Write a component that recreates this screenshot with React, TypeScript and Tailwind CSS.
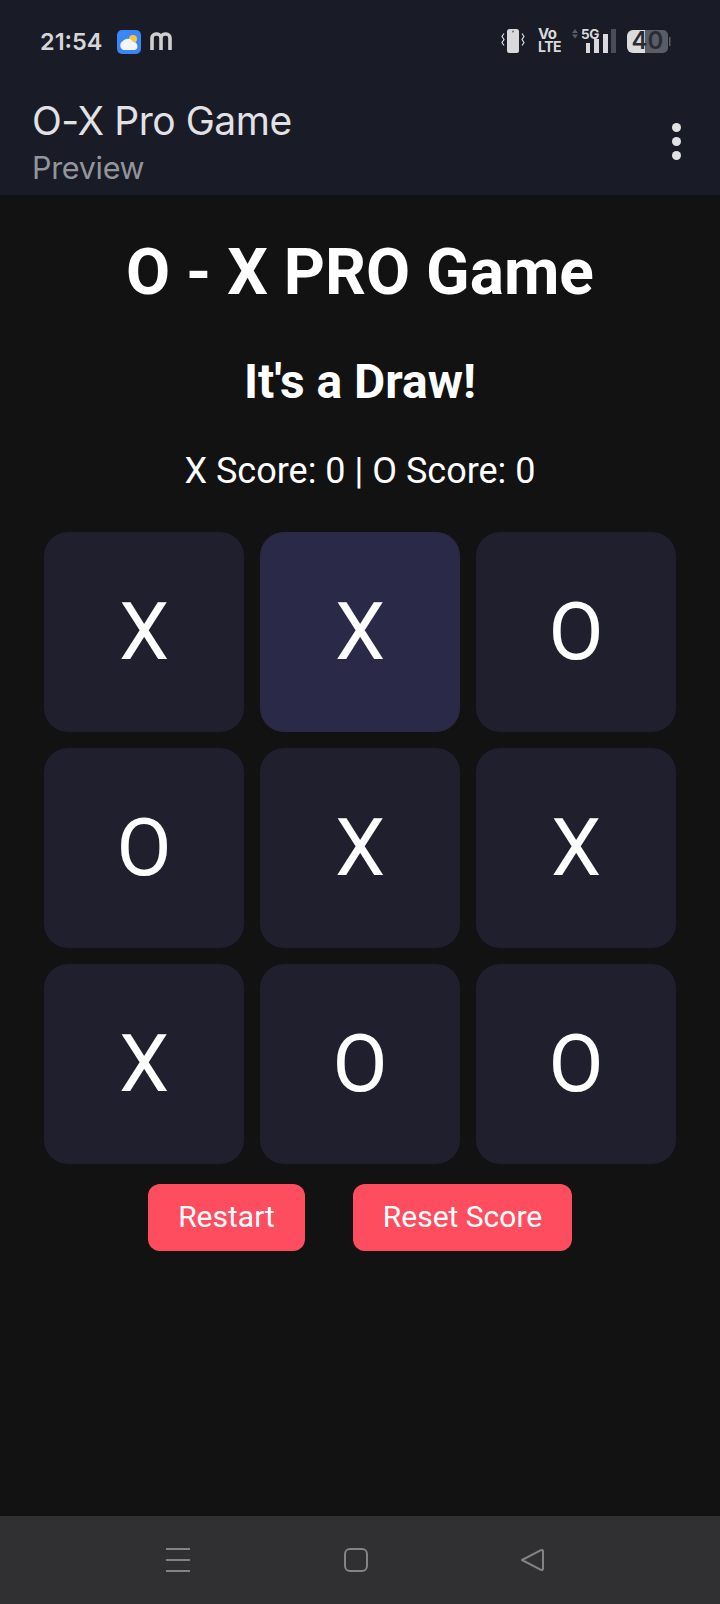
import React from "react";

const cells = ["X", "X", "O", "O", "X", "X", "X", "O", "O"];

function StatusIcons() {
  return (
    <svg width="190" height="30" viewBox="0 0 190 30" fill="none">
      {/* vibrate */}
      <rect x="16" y="4" width="12" height="24" rx="2.5" fill="#d9d9dc" />
      <circle cx="22" cy="6.500" r="0.9" fill="#666" />
      <path d="M13 8.500l-2 3 2 3-2 3 2 3M31 8.500l2 3-2 3 2 3-2 3" stroke="#d9d9dc" strokeWidth="1.200" />
      {/* signal */}
      <rect x="95" y="18" width="4" height="10" fill="#d9d9dc" />
      <rect x="103" y="14" width="5" height="14" fill="#d9d9dc" />
      <rect x="112" y="9" width="5" height="19" fill="#d9d9dc" />
      <rect x="120" y="4" width="5" height="24" fill="#4a4c57" />
      <path d="M81 8l3-4 3 4zM81 9.500l3 4 3-4z" fill="#5a5c68" />
      {/* battery */}
      <path d="M136 11a6 6 0 0 1 6-6h12v23h-12a6 6 0 0 1-6-6z" fill="#dcdcde" />
      <path d="M154 5h18a5 5 0 0 1 5 5v13a5 5 0 0 1-5 5h-18z" fill="#5b5d66" />
      <path d="M178 12h1.500v9H178z" fill="#5b5d66" />
    </svg>
  );
}

export default function App() {
  return (
    <div className="w-[720px] h-[1604px] flex flex-col bg-[#121212] text-white font-['Roboto',sans-serif] overflow-hidden">
      <header className="h-[195px] shrink-0 bg-[#191b27] relative font-['Inter',sans-serif]">
        <div className="h-[84px] flex items-center pl-[40px] pr-[44px]">
          <span className="text-[23.5px] font-semibold text-[#d6d6d9] w-[77px]">21:54</span>
          <svg width="24" height="24" viewBox="0 0 24 24" className="mr-[9px] -mt-px">
            <rect width="24" height="24" rx="5" fill="#3b86f3" />
            <circle cx="16" cy="9" r="4" fill="#f9c642" />
            <path d="M6 20a5 5 0 0 1 0-9 6 6 0 0 1 10 1 4.200 4.200 0 0 1 2 8z" fill="#f2f6fc" />
          </svg>
          <svg width="22" height="18" viewBox="0 0 22 18" fill="none" stroke="#cfcfd2" strokeWidth="3.600" className="-mt-[2px]">
            <path d="M2 18V6a4 4 0 0 1 4-4h1a4 4 0 0 1 4 4v12M11 6a4 4 0 0 1 4-4h1a4 4 0 0 1 4 4v12" />
          </svg>
        </div>
        <div className="absolute left-[491px] top-[25px] w-[190px] h-[30px]">
          <StatusIcons />
          <div className="absolute left-[47px] top-[3px] w-[24px] flex flex-col font-bold text-[#d9d9dc]">
            <span className="block h-[12px] text-[15px] leading-[12px] tracking-[-0.5px]">Vo</span>
            <span className="block h-[12px] mt-px text-[14px] leading-[12px] tracking-[-0.5px]">LTE</span>
          </div>
          <span className="absolute left-[90px] top-[3px] text-[13.500px] leading-[12px] font-bold text-[#d9d9dc] tracking-[-0.5px]">5G</span>
          <span className="absolute left-[136px] top-[2px] w-[41px] text-center text-[24px] leading-[28px] font-semibold text-[#2a2c35]">40</span>
        </div>
        <div className="absolute left-[32px] top-[97px] text-[39px] leading-[48px] text-[#e2e2e5] tracking-[-0.45px]">O-X Pro Game</div>
        <div className="absolute left-[32px] top-[148px] text-[30.500px] leading-[40px] text-[#94959b] tracking-[-0.3px]">Preview</div>
        <div className="absolute left-[672px] top-[123px] flex flex-col gap-[5px]">
          <span className="w-[9px] h-[9px] rounded-full bg-[#e2e2e5]" />
          <span className="w-[9px] h-[9px] rounded-full bg-[#e2e2e5]" />
          <span className="w-[9px] h-[9px] rounded-full bg-[#e2e2e5]" />
        </div>
      </header>

      <main className="flex-1 flex flex-col items-center">
        <h1 className="mt-[40px] text-[64px] leading-[75px] font-bold">O - X PRO Game</h1>
        <h2 className="mt-[44px] text-[48px] leading-[56px] font-bold">It's a Draw!</h2>
        <p className="mt-[40px] text-[36px] leading-[42px]">X Score: 0 | O Score: 0</p>
        <div className="mt-[40px] grid grid-cols-3 gap-[16px]">
          {cells.map((c, i) => (
            <div
              key={i}
              className={`w-[200px] h-[200px] rounded-[24px] flex items-center justify-center text-[80px] leading-none ${
                i === 1 ? "bg-[#2a2a48]" : "bg-[#1f1f2e]"
              }`}
            >
              {c}
            </div>
          ))}
        </div>
        <div className="mt-[20px] flex gap-[48px]">
          <div className="h-[67px] w-[157px] pb-[2px] rounded-[12px] bg-[#ff4d60] flex items-center justify-center text-[30px]">Restart</div>
          <div className="h-[67px] w-[219px] pb-[2px] rounded-[12px] bg-[#ff4d60] flex items-center justify-center text-[30px]">Reset Score</div>
        </div>
      </main>

      <nav className="h-[88px] shrink-0 bg-[#303032] relative">
        <svg className="absolute left-[166px] top-[32px]" width="24" height="24" viewBox="0 0 24 24" fill="none" stroke="#838385" strokeWidth="2">
          <path d="M0 1h24M0 12h24M0 23h24" />
        </svg>
        <svg className="absolute left-[344px] top-[32px]" width="24" height="24" viewBox="0 0 24 24" fill="none" stroke="#838385" strokeWidth="2">
          <rect x="1" y="1" width="22" height="22" rx="5" />
        </svg>
        <svg className="absolute left-[520px] top-[32px]" width="25" height="24" viewBox="0 0 25 24" fill="none" stroke="#838385" strokeWidth="2" strokeLinejoin="round">
          <path d="M2 12L21 2.200Q23 1.500 23 3.500V20.500Q23 22.500 21 21.800Z" />
        </svg>
      </nav>
    </div>
  );
}
